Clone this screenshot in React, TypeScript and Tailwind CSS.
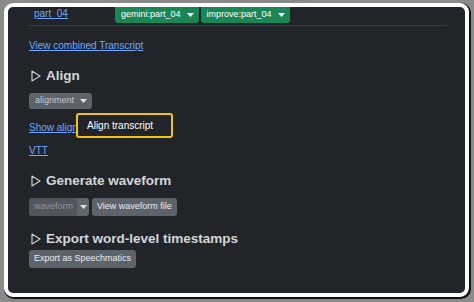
import React from "react";

const Caret: React.FC<{ className?: string }> = ({ className }) => (
    <svg width="7" height="4" viewBox="0 0 7 4" className={className}>
        <path d="M0 0 L7 0 L3.5 4 Z" fill="currentColor" />
    </svg>
);

const Triangle: React.FC = () => (
    <svg width="10" height="12" viewBox="0 0 10 12" className="text-[#c9cdd1]">
        <path d="M1 1 L9 6 L1 11 Z" fill="none" stroke="currentColor" strokeWidth="1.2" strokeLinejoin="round" />
    </svg>
);

const Heading: React.FC<{ title: string }> = ({ title }) => (
    <div className="flex items-center gap-[5px] pl-[2px] h-[16px]">
        <Triangle />
        <h3 className="text-[13.5px] font-bold leading-[16px] text-[#d3d6d9]">{title}</h3>
    </div>
);

const GreenDrop: React.FC<{ label: string }> = ({ label }) => (
    <div className="flex items-center gap-[6px] h-[16px] pl-[6px] pr-[5px] rounded-b-[3px] bg-[#198754] text-white text-[9px]">
        <span>{label}</span>
        <Caret className="text-white" />
    </div>
);

const Link: React.FC<{ children: React.ReactNode }> = ({ children }) => (
    <a className="text-[10px] text-[#6ea8fe] underline">{children}</a>
);

export default function App() {
    return (
        <div
            className="w-[474px] h-[302px] bg-[#8a8a8a] pt-[3px] pl-[4px]"
            style={{ fontFamily: '"Liberation Sans", Arial, sans-serif' }}
        >
            <div className="w-[465px] h-[294px] rounded-[9px] border-[4px] border-white bg-[#212529] overflow-hidden shadow-[1px_1px_0_1px_#111]">
                <div className="pl-[21px] pr-[18px]">
                    <div className="flex items-start h-[15px]">
                        <div className="leading-[10px] ml-[5px] w-[81px]">
                            <Link>part_04</Link>
                        </div>
                        <div className="flex gap-[2px]">
                            <GreenDrop label="gemini:part_04" />
                            <GreenDrop label="improve:part_04" />
                        </div>
                    </div>
                    <div className="h-px bg-[#3a3f44] mt-[3px]" />
                    <div className="mt-[12px] leading-[12px]">
                        <Link>View combined Transcript</Link>
                    </div>
                    <div className="mt-[16px]">
                        <Heading title="Align" />
                    </div>
                    <div className="mt-[9px] flex">
                        <div className="flex items-center gap-[6px] h-[16px] pl-[6px] pr-[5px] rounded-[3px] bg-[#5c636a] text-[9px] text-[#c3c7cb]">
                            <span>alignment</span>
                            <Caret className="text-[#e0e3e6]" />
                        </div>
                    </div>
                    <div className="mt-[11px] leading-[12px] relative">
                        <Link>Show alignment</Link>
                        <div className="absolute left-[47px] top-[-7px] w-[97px] h-[25px] rounded-[3px] border-[2px] border-[#f1c40f] bg-[#212529] flex items-center pl-[9px] text-[10px] text-white">
                            Align transcript
                        </div>
                    </div>
                    <div className="mt-[9px] leading-[12px]">
                        <Link>VTT</Link>
                    </div>
                    <div className="mt-[16px]">
                        <Heading title="Generate waveform" />
                    </div>
                    <div className="mt-[9px] flex gap-[3px]">
                        <div className="flex h-[18px] rounded-[3px] overflow-hidden text-[9px]">
                            <div className="flex items-center pl-[5px] pr-[5px] w-[48px] bg-[#50565c] text-[#8f959a]">waveform</div>
                            <div className="flex items-center justify-center w-[12px] bg-[#5f666c]">
                                <Caret className="text-[#e0e3e6]" />
                            </div>
                        </div>
                        <div className="flex items-center h-[18px] px-[5px] rounded-[3px] bg-[#5c636a] text-[9px] text-[#e9ecef]">
                            View waveform file
                        </div>
                    </div>
                    <div className="mt-[15px]">
                        <Heading title="Export word-level timestamps" />
                    </div>
                    <div className="mt-[3px] flex">
                        <div className="flex items-center h-[18px] px-[5px] rounded-[3px] bg-[#5c636a] text-[9px] text-[#e9ecef]">
                            Export as Speechmatics
                        </div>
                    </div>
                </div>
            </div>
        </div>
    );
}
